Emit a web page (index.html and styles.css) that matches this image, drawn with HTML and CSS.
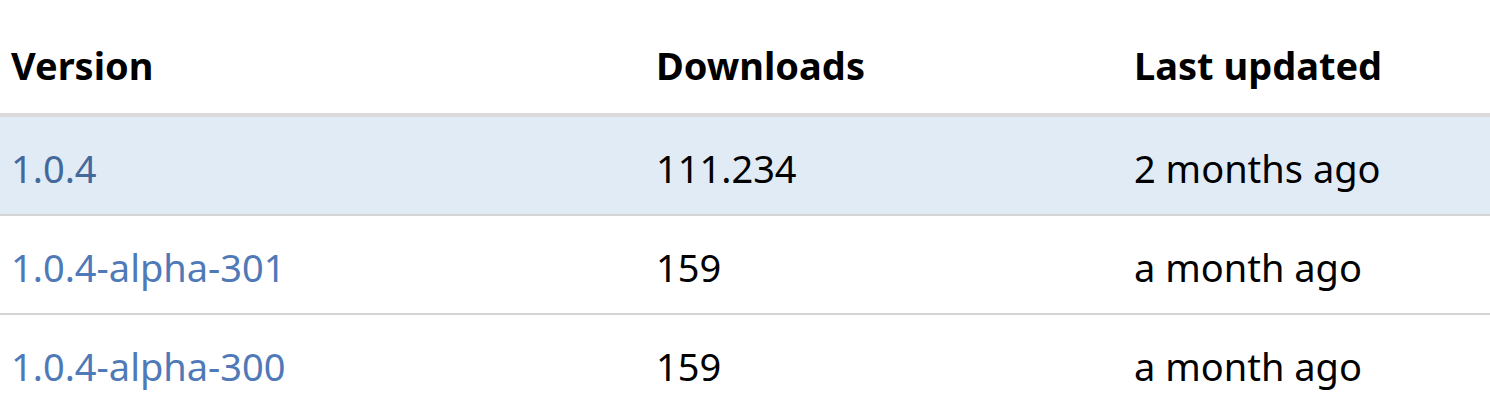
FILE: index.html
```html
<!DOCTYPE html>
<html lang="en">
<head>
<meta charset="utf-8">
<title>Versions</title>
<link rel="stylesheet" href="styles.css">
</head>
<body>
<table class="versions">
  <colgroup>
    <col class="col-version">
    <col class="col-downloads">
    <col class="col-updated">
  </colgroup>
  <thead>
    <tr>
      <th>Version</th>
      <th>Downloads</th>
      <th>Last updated</th>
    </tr>
  </thead>
  <tbody>
    <tr class="current">
      <td><a href="#" class="link link-current">1.0.4</a></td>
      <td>111.234</td>
      <td>2 months ago</td>
    </tr>
    <tr>
      <td><a href="#" class="link">1.0.4-alpha-301</a></td>
      <td>159</td>
      <td>a month ago</td>
    </tr>
    <tr>
      <td><a href="#" class="link">1.0.4-alpha-300</a></td>
      <td>159</td>
      <td>a month ago</td>
    </tr>
  </tbody>
</table>
</body>
</html>
```

FILE: styles.css
```css
html, body {
  margin: 0;
  padding: 0;
  background: #ffffff;
}

body {
  font-family: "Noto Sans", "Open Sans", sans-serif;
  font-size: 38px;
  color: #000000;
  overflow: hidden;
}

.versions {
  width: 100%;
  border-collapse: collapse;
  table-layout: fixed;
}

.col-version { width: 645px; }
.col-downloads { width: 478px; }
.col-updated { width: auto; }

.versions th,
.versions td {
  text-align: left;
  padding-left: 11px;
  padding-right: 12px;
  line-height: 37px;
  white-space: nowrap;
}

.versions th {
  font-weight: 700;
  padding-top: 47px;
  padding-bottom: 29px;
  border-bottom: 4px solid #dadada;
}

.versions td {
  font-weight: 400;
  padding-top: 33px;
  padding-bottom: 27px;
  border-bottom: 2px solid #d5d5d5;
}

.versions tr.current td {
  background: #e0ebf5;
}

.link {
  color: #4f79b7;
  text-decoration: none;
}

.link-current {
  color: #44689a;
}
```
